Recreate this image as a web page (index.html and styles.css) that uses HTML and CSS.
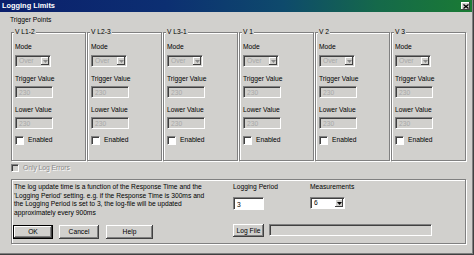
FILE: index.html
```html
<!DOCTYPE html>
<html>
<head>
<meta charset="utf-8">
<title>Logging Limits</title>
<link rel="stylesheet" href="styles.css">
</head>
<body>
<div class="window">
  <div class="titlebar">
    <span class="title">Logging Limits</span>
    <span class="close"><svg width="6" height="5" viewBox="0 0 6 5"><path d="M0.5 0.5L5.5 4.5M5.5 0.5L0.5 4.5" stroke="#000" stroke-width="1.3"/></svg></span>
  </div>
  <div class="content">
    <div class="section-label">Trigger Points</div>
    <div class="groups">
      <fieldset class="group">
        <legend>V L1-2</legend>
        <div class="lbl first">Mode</div>
        <div class="combo off"><span class="combo-text">Over</span><span class="combo-btn"><svg width="5" height="3" viewBox="0 0 5 3"><path d="M0 0H5L2.5 3Z" fill="#8a8a8a"/></svg></span></div>
        <div class="lbl">Trigger Value</div>
        <div class="edit off">230</div>
        <div class="lbl">Lower Value</div>
        <div class="edit off">230</div>
        <div class="check"><span class="box"></span><span>Enabled</span></div>
      </fieldset>
      <fieldset class="group">
        <legend>V L2-3</legend>
        <div class="lbl first">Mode</div>
        <div class="combo off"><span class="combo-text">Over</span><span class="combo-btn"><svg width="5" height="3" viewBox="0 0 5 3"><path d="M0 0H5L2.5 3Z" fill="#8a8a8a"/></svg></span></div>
        <div class="lbl">Trigger Value</div>
        <div class="edit off">230</div>
        <div class="lbl">Lower Value</div>
        <div class="edit off">230</div>
        <div class="check"><span class="box"></span><span>Enabled</span></div>
      </fieldset>
      <fieldset class="group">
        <legend>V L3-1</legend>
        <div class="lbl first">Mode</div>
        <div class="combo off"><span class="combo-text">Over</span><span class="combo-btn"><svg width="5" height="3" viewBox="0 0 5 3"><path d="M0 0H5L2.5 3Z" fill="#8a8a8a"/></svg></span></div>
        <div class="lbl">Trigger Value</div>
        <div class="edit off">230</div>
        <div class="lbl">Lower Value</div>
        <div class="edit off">230</div>
        <div class="check"><span class="box"></span><span>Enabled</span></div>
      </fieldset>
      <fieldset class="group">
        <legend>V 1</legend>
        <div class="lbl first">Mode</div>
        <div class="combo off"><span class="combo-text">Over</span><span class="combo-btn"><svg width="5" height="3" viewBox="0 0 5 3"><path d="M0 0H5L2.5 3Z" fill="#8a8a8a"/></svg></span></div>
        <div class="lbl">Trigger Value</div>
        <div class="edit off">230</div>
        <div class="lbl">Lower Value</div>
        <div class="edit off">230</div>
        <div class="check"><span class="box"></span><span>Enabled</span></div>
      </fieldset>
      <fieldset class="group">
        <legend>V 2</legend>
        <div class="lbl first">Mode</div>
        <div class="combo off"><span class="combo-text">Over</span><span class="combo-btn"><svg width="5" height="3" viewBox="0 0 5 3"><path d="M0 0H5L2.5 3Z" fill="#8a8a8a"/></svg></span></div>
        <div class="lbl">Trigger Value</div>
        <div class="edit off">230</div>
        <div class="lbl">Lower Value</div>
        <div class="edit off">230</div>
        <div class="check"><span class="box"></span><span>Enabled</span></div>
      </fieldset>
      <fieldset class="group">
        <legend>V 3</legend>
        <div class="lbl first">Mode</div>
        <div class="combo off"><span class="combo-text">Over</span><span class="combo-btn"><svg width="5" height="3" viewBox="0 0 5 3"><path d="M0 0H5L2.5 3Z" fill="#8a8a8a"/></svg></span></div>
        <div class="lbl">Trigger Value</div>
        <div class="edit off">230</div>
        <div class="lbl">Lower Value</div>
        <div class="edit off">230</div>
        <div class="check"><span class="box"></span><span>Enabled</span></div>
      </fieldset>
    </div>
    <div class="check only"><span class="box"></span><span class="disabled-text">Only Log Errors</span></div>
    <div class="bottom">
      <div class="left-col">
        <p class="note">The log update time is a function of the Response Time and the<br>'Logging Period' setting. e.g. if the Response Time is 300ms and<br>the Logging Period is set to 3, the log-file will be updated<br>approximately every 900ms</p>
        <div class="buttons">
          <button class="btn default ok">OK</button>
          <button class="btn cancel">Cancel</button>
          <button class="btn help">Help</button>
        </div>
      </div>
      <div class="right-col">
        <div class="fields">
          <div class="field period">
            <div class="lbl">Logging Period</div>
            <div class="edit white period-edit">3</div>
          </div>
          <div class="field">
            <div class="lbl">Measurements</div>
            <div class="combo white meas"><span class="combo-text">6</span><span class="combo-btn"><svg width="5" height="3" viewBox="0 0 5 3"><path d="M0 0H5L2.5 3Z" fill="#000"/></svg></span></div>
          </div>
        </div>
        <div class="logrow">
          <button class="btn logfile">Log File</button>
          <div class="edit off path"></div>
        </div>
      </div>
    </div>
  </div>
</div>
</body>
</html>
```
FILE: styles.css
```css
* { box-sizing: border-box; }
html, body { margin: 0; padding: 0; }
body {
  width: 474px;
  height: 255px;
  overflow: hidden;
  background: #d1d0cd;
  font-family: "Liberation Sans", Arial, sans-serif;
  font-size: 6.7px;
  line-height: 8px;
  color: #000;
}
.window {
  width: 474px;
  height: 255px;
  display: flex;
  flex-direction: column;
  padding: 0 2px 2px 0;
  box-shadow: inset -1px -1px #404040, inset -2px -2px #808080;
}
.titlebar {
  height: 12px;
  flex: none;
  display: flex;
  align-items: center;
  justify-content: space-between;
  padding: 0 2px 0 2px;
  background: linear-gradient(90deg, #0b1f6c 0%, #0c2f72 35%, #0e4a6c 60%, #15694a 80%, #1a7b34 100%);
  color: #fff;
}
.title {
  font-weight: bold;
  font-size: 7.4px;
}
.close {
  width: 9px;
  height: 8px;
  display: flex;
  align-items: center;
  justify-content: center;
  background: #d1d0cd;
  box-shadow: inset -1px -1px #404040, inset 1px 1px #fff;
}
.close svg { display: block; }
.content {
  padding-left: 10px;
}
.section-label {
  margin-top: 4px;
  height: 8px;
}
.groups {
  display: flex;
  gap: 1px;
  margin-top: 4px;
  margin-left: 1px;
}
.group {
  width: 75px;
  margin: 0;
  padding: 0 0 15px 3px;
  border: 1px solid #808080;
  box-shadow: inset 1px 1px #fff, 1px 1px #fff;
  min-width: 0;
}
.group legend {
  padding: 0 1px;
  margin-left: -1px;
  line-height: 8px;
  background: #d1d0cd;
}
.lbl {
  height: 8px;
  white-space: nowrap;
  margin-top: 8px;
}
.lbl.first { margin-top: 7px; }
.combo {
  margin-top: 4px;
  width: 36px;
  height: 12px;
  display: flex;
  border: 1px solid;
  border-color: #808080 #fff #fff #808080;
  box-shadow: inset 1px 1px #404040;
  padding: 1px 1px 1px 1px;
}
.combo-text {
  flex: 1;
  padding-left: 2px;
  line-height: 8px;
}
.combo-btn {
  width: 8px;
  display: flex;
  align-items: center;
  justify-content: center;
  background: #d1d0cd;
  box-shadow: inset -1px -1px #404040, inset 1px 1px #fff;
}
.combo-btn svg { display: block; }
.combo.off .combo-text { color: #a8a8a8; }
.combo.white { background: #fff; }
.edit {
  margin-top: 3px;
  width: 38px;
  height: 12px;
  border: 1px solid;
  border-color: #808080 #fff #fff #808080;
  box-shadow: inset 1px 1px #404040;
  padding: 1px 0 0 3px;
  line-height: 9px;
}
.edit.off { color: #a8a8a8; }
.edit.white { background: #fff; }
.check {
  display: flex;
  align-items: center;
  gap: 4px;
  height: 10px;
  margin-top: 6px;
  white-space: nowrap;
}
.box {
  width: 9px;
  height: 9px;
  flex: none;
  background: #fff;
  border: 1px solid;
  border-color: #808080 #fff #fff #808080;
  box-shadow: inset 1px 1px #404040;
}
.check.only {
  margin-top: 2px;
  margin-left: 1px;
}
.check.only .box { background: #d1d0cd; width: 8px; height: 8px; }
.disabled-text {
  color: #8a8a8a;
  text-shadow: 1px 1px #fff;
}
.bottom {
  margin-top: 6px;
  margin-left: 1px;
  width: 455px;
  height: 65px;
  display: flex;
  border: 1px solid #808080;
  box-shadow: inset 1px 1px #fff, 1px 1px #fff;
}
.left-col {
  width: 221px;
  flex: none;
  display: flex;
  flex-direction: column;
  padding: 3px 0 4px 2px;
}
.note {
  margin: 0;
  line-height: 8.5px;
  white-space: nowrap;
}
.buttons {
  margin-top: auto;
  margin-left: -1px;
  display: flex;
  gap: 6px;
}
.btn {
  font: inherit;
  color: #000;
  margin: 0;
  padding: 0;
  height: 14px;
  background: #d1d0cd;
  border: none;
  box-shadow: inset -1px -1px #404040, inset 1px 1px #fff, inset -2px -2px #808080;
  line-height: 12px;
}
.btn.ok { width: 40px; }
.btn.cancel { width: 40px; }
.btn.help { width: 47px; margin-left: 1px; }
.btn.default {
  border: 1px solid #000;
  box-shadow: inset -1px -1px #404040, inset 1px 1px #fff, inset -2px -2px #808080;
}
.right-col {
  flex: 1;
  display: flex;
  flex-direction: column;
  padding: 3px 0 6px 0;
}
.fields {
  display: flex;
}
.field .lbl { margin-top: 0; }
.field.period { width: 77px; }
.period-edit {
  margin-top: 6px;
  width: 31px;
  height: 13px;
  padding-top: 2px;
}
.meas {
  margin-top: 6px;
  width: 35px;
  height: 12px;
}
.logrow {
  margin-top: auto;
  display: flex;
  align-items: flex-start;
  gap: 5px;
}
.btn.logfile { width: 31px; height: 13px; line-height: 11px; }
.path {
  margin-top: 0;
  width: 163px;
  height: 12px;
}
```
